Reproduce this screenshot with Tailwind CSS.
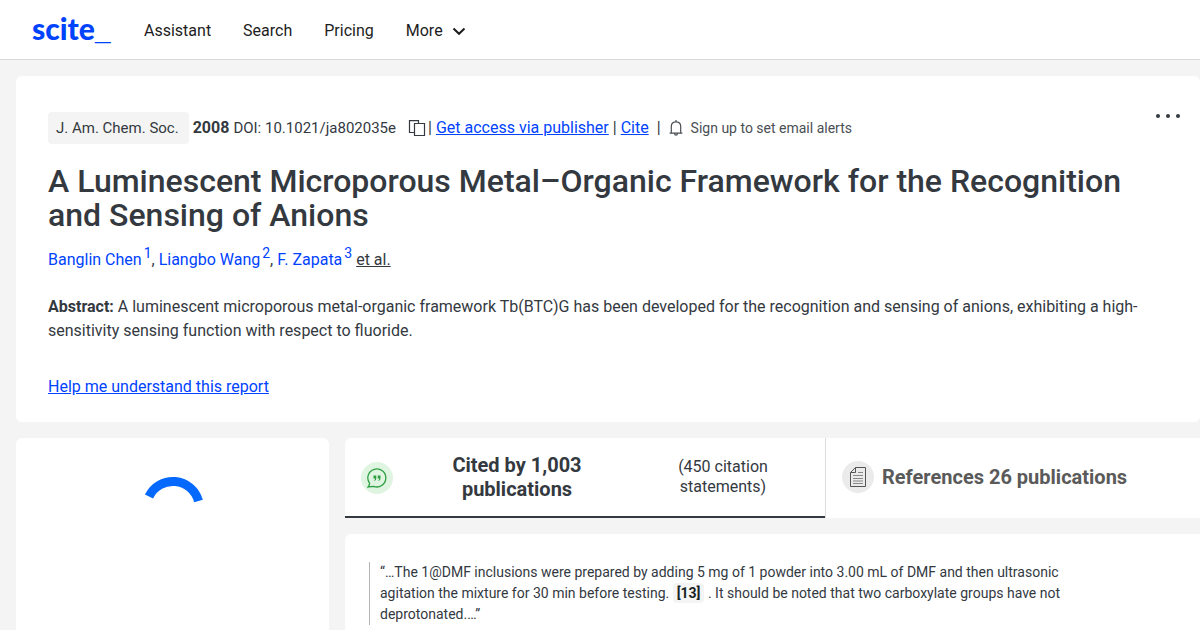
<!DOCTYPE html>
<html lang="en">
<head>
<meta charset="utf-8">
<meta name="viewport" content="width=device-width, initial-scale=1">
<title>A Luminescent Microporous Metal–Organic Framework - scite</title>
<script src="https://cdn.jsdelivr.net/npm/@tailwindcss/browser@4"></script>
</head>
<body class="min-h-screen overflow-x-hidden bg-[#f4f4f4] font-['Roboto','Liberation_Sans',sans-serif] text-base text-[#33393f]">
<header class="flex h-15 items-center gap-8 border-b border-[#d8d8d8] bg-white px-8 text-[#1d1d1d]">
  <a href="#" class="w-20 font-['Lato',sans-serif] text-[30px] leading-8 font-black whitespace-nowrap text-[#0043ff]">scite<span class="font-['Liberation_Sans',sans-serif] text-[28px] font-bold">_</span></a>
  <nav class="flex items-center gap-8 pt-0.5">
    <a href="#">Assistant</a>
    <a href="#">Search</a>
    <a href="#">Pricing</a>
    <button type="button" class="flex items-center gap-2">More
      <svg class="size-4" viewBox="0 0 16 16" fill="none" stroke="currentColor" stroke-width="2"><path d="M2.5 5.500 8 10.800 13.500 5.500"/></svg>
    </button>
  </nav>
</header>
<main class="flex flex-col gap-4 pt-4 pl-4">
  <section class="rounded-md bg-white px-8 pt-9 pb-[23px]">
    <div class="flex items-start justify-between">
      <div class="flex h-8 items-center gap-1 whitespace-nowrap">
        <span class="rounded bg-[#f4f4f4] py-1 pr-2.5 pl-2 text-[15px] leading-6">J. Am. Chem. Soc.</span>
        <strong class="font-bold">2008</strong>
        <span class="text-[15px]">DOI: 10.1021/ja802035e</span>
        <button type="button" aria-label="Copy DOI" class="ml-2"><svg class="h-4 w-[18px]" viewBox="0 0 18 16" fill="none" stroke="currentColor" stroke-width="1.200"><path d="M6 12.500H1.500V.6h9V3M6.500 3.500h10v12h-10z"/></svg></button>
        <span class="-ml-0.5">|</span>
        <a href="#" class="text-[#0043ff] underline">Get access via publisher</a>
        <span>|</span>
        <a href="#" class="text-[#0043ff] underline">Cite</a>
        <span class="ml-1">|</span>
        <button type="button" class="ml-1 flex items-center gap-2 text-sm text-[#4a4f54]">
          <svg class="h-4 w-3.5" viewBox="0 0 14 16" fill="none" stroke="currentColor" stroke-width="1.2"><path d="M.6 13.200h12.800M2.300 13V6.200C2.300 3.500 4.200 1.800 7 1.800s4.700 1.700 4.700 4.400V13M7 0v2M5.500 13.500c.2 2.200 2.800 2.200 3 0"/></svg>
          Sign up to set email alerts</button>
      </div>
      <button type="button" aria-label="More options" class="-mr-3"><svg class="h-2 w-6" viewBox="0 0 24 8" fill="currentColor"><circle cx="2" cy="4" r="2"/><circle cx="12" cy="4" r="2"/><circle cx="22" cy="4" r="2"/></svg></button>
    </div>
    <h1 class="mt-5 text-[32px] leading-[34px] font-medium">A Luminescent Microporous Metal–Organic Framework for the Recognition and Sensing of Anions</h1>
    <p class="mt-4 leading-6"><a href="#" class="text-[#0043ff]">Banglin Chen<sup class="ml-0.5 text-sm leading-none">1</sup></a>, <a href="#" class="text-[#0043ff]">Liangbo Wang<sup class="ml-0.5 text-sm leading-none">2</sup></a>, <a href="#" class="text-[#0043ff]">F. Zapata<sup class="ml-0.5 text-sm leading-none">3</sup></a> <button type="button" class="underline">et al.</button></p>
    <p class="mt-[23px] leading-6"><strong class="font-bold">Abstract:</strong> A luminescent microporous metal-organic framework Tb(BTC)G has been developed for the recognition and sensing of anions, exhibiting a high-sensitivity sensing function with respect to fluoride.</p>
    <a href="#" class="mt-8 inline-block leading-6 text-[#0043ff] underline">Help me understand this report</a>
  </section>
  <div class="flex gap-4">
    <aside class="flex min-h-48 w-[313px] shrink-0 justify-center rounded-md bg-white pt-9">
      <svg class="size-16" role="img" aria-label="Loading" viewBox="0 0 64 64" fill="none" stroke="#0569ff" stroke-width="9"><path d="M8 22.500A26.500 26.500 0 0 1 57.500 27"/></svg>
    </aside>
    <div class="flex min-w-0 grow flex-col gap-4">
      <div class="flex h-20 rounded-tl-md bg-white" role="tablist">
        <button type="button" role="tab" aria-selected="true" class="flex w-[480px] shrink-0 items-center border-b-2 border-[#33393f] pl-4">
          <span class="mt-0.5 flex size-8 items-center justify-center rounded-full bg-[#dff5e1] text-[#2f9e41]"><svg class="size-5" viewBox="0 0 20 20" fill="none" stroke="currentColor" stroke-width="1.300"><path d="M2.600 15.300A9 9 0 1 1 6.500 18.300L1 19C1.900 18 2.700 17 2.600 15.300z"/><path d="M6.500 7.500h2.800v2.800c0 1.300-.8 2.300-2 2.700v-1c.5-.3.8-.8.8-1.500H6.500zM10.700 7.500h2.800v2.800c0 1.300-.8 2.300-2 2.700v-1c.5-.3.8-.8.8-1.500h-1.600z" fill="currentColor" stroke="none"/></svg></span>
          <span class="flex-1 px-10 text-center text-xl leading-6 font-bold">Cited by 1,003 publications</span>
          <span class="w-[184px] pr-10 pl-5 text-center leading-5">(450 citation statements)</span>
        </button>
        <button type="button" role="tab" aria-selected="false" class="flex grow items-center gap-2 border-l border-[#dcdcdc] pb-0.5 pl-4 text-[#5a5a5a]">
          <span class="flex size-8 items-center justify-center rounded-full bg-[#ebebeb]"><svg class="h-5 w-4" viewBox="0 0 16 20" fill="none" stroke="#555"><path d="M5.500.5h10v19H.5v-14zM5.500.5v5h-5"/><path d="M8 5.500h5M3 8.500h10M3 11.500h10M3 14h10M3 16.500h10" stroke="#888"/></svg></span>
          <span class="text-xl leading-6 font-bold whitespace-nowrap">References 26 publications</span>
        </button>
      </div>
      <article class="rounded-tl-md bg-white px-6 pt-7 pb-6">
        <blockquote class="max-w-[720px] border-l border-[#b5b5b5] pl-2.5 text-sm leading-[21px]">“…The 1@DMF inclusions were prepared by adding 5 mg of 1 powder into 3.00 mL of DMF and then ultrasonic agitation the mixture for 30 min before testing. <strong class="rounded bg-[#f4f4f4] px-1 py-0.5 font-bold text-[#17211f]">[13]</strong> . It should be noted that two carboxylate groups have not deprotonated.…”</blockquote>
      </article>
    </div>
  </div>
</main>
</body>
</html>
